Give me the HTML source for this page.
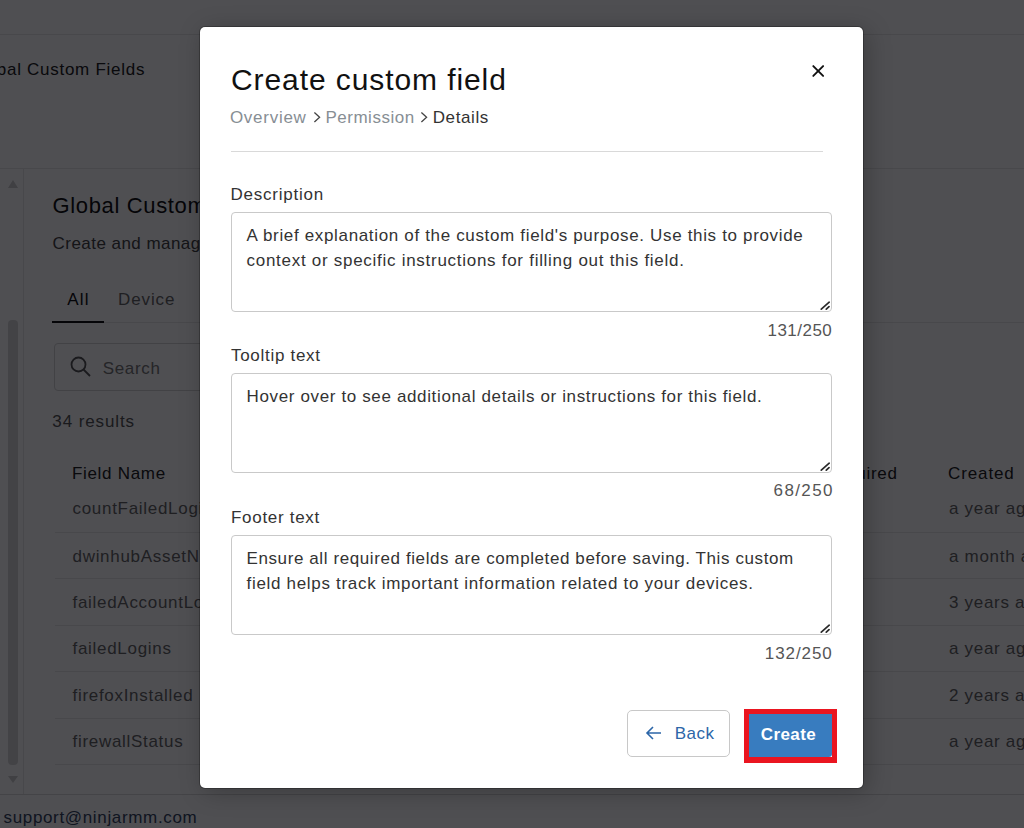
<!DOCTYPE html>
<html>
<head>
<meta charset="utf-8">
<style>
html,body{margin:0;padding:0;}
body{width:1024px;height:828px;overflow:hidden;position:relative;background:#fff;font-family:"Liberation Sans",sans-serif;}
.t{position:absolute;white-space:pre;font-size:17px;line-height:17px;letter-spacing:0.7px;}
.ln{position:absolute;background:#e8e8e8;}
#overlay{position:absolute;left:0;top:0;width:1024px;height:828px;background:rgba(0,0,5,0.69);}
#modal{position:absolute;left:200px;top:27px;width:663px;height:761px;background:#fff;border-radius:5px;box-shadow:0 0 0 1px rgba(0,0,0,0.25),4px 4px 24px rgba(0,0,0,0.25);}
.ta{position:absolute;left:231px;width:599px;height:98px;border:1px solid #c9c9c9;border-radius:4px;box-sizing:content-box;}
.tat{position:absolute;left:246.5px;width:600px;font-size:17px;line-height:25px;letter-spacing:0.58px;color:#333;white-space:pre;}
.grip{position:absolute;width:12px;height:12px;}
</style>
</head>
<body>
<!-- background page -->
<div class="ln" style="left:0;top:34px;width:1024px;height:1px;"></div>
<div class="t" style="left:-31.8px;top:60.9px;letter-spacing:0.72px;color:#222;">Global Custom Fields</div>
<div class="ln" style="left:0;top:168px;width:1024px;height:1px;"></div>
<div class="ln" style="left:23px;top:169px;width:1px;height:625px;background:#e8e8e8;"></div>
<div class="ln" style="left:0;top:794px;width:1024px;height:1px;background:#dcdcdc;"></div>
<!-- scrollbar -->
<div style="position:absolute;left:8px;top:180px;width:0;height:0;border-left:5.5px solid transparent;border-right:5.5px solid transparent;border-bottom:8px solid #cdcdcd;"></div>
<div style="position:absolute;left:8px;top:320px;width:10px;height:445px;border-radius:4px;background:#d9d9d9;"></div>
<div style="position:absolute;left:8px;top:776px;width:0;height:0;border-left:5.5px solid transparent;border-right:5.5px solid transparent;border-top:7px solid #cdcdcd;"></div>

<div class="t" style="left:52.6px;top:194.5px;font-size:22px;line-height:22px;letter-spacing:0.64px;color:#111;">Global Custom Fields</div>
<div class="t" style="left:52.6px;top:234.6px;letter-spacing:0.45px;color:#444;">Create and manage custom fields</div>
<div class="t" style="left:67.2px;top:290.5px;letter-spacing:1.2px;color:#111;">All</div>
<div class="t" style="left:118px;top:290.5px;letter-spacing:0.9px;color:#666;">Device</div>
<div class="ln" style="left:53px;top:322px;width:971px;height:1px;"></div>
<div style="position:absolute;left:52px;top:321px;width:52px;height:2px;background:#111;"></div>
<div style="position:absolute;left:54px;top:343px;width:400px;height:46px;border:1px solid #d4d4d4;border-radius:4px;"></div>
<svg style="position:absolute;left:70px;top:356px;" width="22" height="22" viewBox="0 0 22 22"><circle cx="8.5" cy="8.5" r="7" fill="none" stroke="#555" stroke-width="1.8"/><line x1="13.5" y1="13.5" x2="20" y2="20" stroke="#555" stroke-width="1.8"/></svg>
<div class="t" style="left:102.7px;top:360.3px;letter-spacing:0.68px;color:#777;">Search</div>
<div class="t" style="left:52.3px;top:412.7px;letter-spacing:0.9px;color:#555;">34 results</div>

<div class="t" style="left:71.9px;top:465.4px;letter-spacing:0.7px;color:#222;">Field Name</div>
<div class="t" style="left:823px;top:465.4px;color:#222;">Required</div>
<div class="t" style="left:948.1px;top:465.4px;letter-spacing:0.87px;color:#222;">Created</div>

<div class="t" style="left:72.5px;top:500.3px;color:#666;">countFailedLogins</div>
<div class="t" style="left:949px;top:500.3px;color:#666;">a year ago</div>
<div class="ln" style="left:55px;top:532px;width:969px;height:1px;"></div>
<div class="t" style="left:72.5px;top:547.5px;color:#666;">dwinhubAssetNumber</div>
<div class="t" style="left:949px;top:547.5px;color:#666;">a month ago</div>
<div class="ln" style="left:55px;top:578px;width:969px;height:1px;"></div>
<div class="t" style="left:72.5px;top:593.6px;color:#666;">failedAccountLockouts</div>
<div class="t" style="left:949px;top:593.6px;color:#666;">3 years ago</div>
<div class="ln" style="left:55px;top:625px;width:969px;height:1px;"></div>
<div class="t" style="left:72.5px;top:639.5px;color:#666;">failedLogins</div>
<div class="t" style="left:949px;top:639.5px;color:#666;">a year ago</div>
<div class="ln" style="left:55px;top:671px;width:969px;height:1px;"></div>
<div class="t" style="left:72.5px;top:686.5px;color:#666;">firefoxInstalled</div>
<div class="t" style="left:949px;top:686.5px;color:#666;">2 years ago</div>
<div class="ln" style="left:55px;top:718px;width:969px;height:1px;"></div>
<div class="t" style="left:72.5px;top:732.5px;color:#666;">firewallStatus</div>
<div class="t" style="left:949px;top:732.5px;color:#666;">a year ago</div>
<div class="ln" style="left:55px;top:764px;width:969px;height:1px;"></div>

<div class="t" style="left:3.5px;top:808.8px;letter-spacing:0.66px;color:#34455f;">support@ninjarmm.com</div>

<div id="overlay"></div>

<!-- modal -->
<div id="modal"></div>
<div class="t" style="left:231px;top:64.8px;font-size:30px;line-height:30px;letter-spacing:0.91px;color:#111;">Create custom field</div>
<svg style="position:absolute;left:811px;top:64px;" width="14" height="14" viewBox="0 0 14 14"><path d="M2.3 2.1 L12.1 11.9 M12.1 2.1 L2.3 11.9" stroke="#111" stroke-width="1.9" stroke-linecap="round"/></svg>
<div class="t" style="left:229.9px;top:108.8px;letter-spacing:0.73px;color:#878e94;">Overview</div>
<svg style="position:absolute;left:312px;top:110px;" width="10" height="14" viewBox="0 0 10 14"><path d="M2.4 2.4 L7.6 7.2 L2.4 12" fill="none" stroke="#444" stroke-width="1.3"/></svg>
<div class="t" style="left:325.4px;top:108.8px;letter-spacing:0.52px;color:#878e94;">Permission</div>
<svg style="position:absolute;left:419px;top:110px;" width="10" height="14" viewBox="0 0 10 14"><path d="M2.4 2.4 L7.6 7.2 L2.4 12" fill="none" stroke="#444" stroke-width="1.3"/></svg>
<div class="t" style="left:432.7px;top:108.8px;letter-spacing:0.62px;color:#333;">Details</div>
<div style="position:absolute;left:231px;top:151px;width:592px;height:1px;background:#d9d9d9;"></div>

<div class="t" style="left:230.4px;top:185.7px;letter-spacing:0.78px;color:#333;">Description</div>
<div class="ta" style="top:212px;"></div>
<div class="tat" style="top:223.1px;"><span style="letter-spacing:0.66px">A brief explanation of the custom field's purpose. Use this to provide</span>
<span style="letter-spacing:0.72px">context or specific instructions for filling out this field.</span></div>
<svg class="grip" style="left:818px;top:298px;" viewBox="0 0 12 12"><path d="M3.3 11.2 L11.2 4.2 M8.3 11.2 L11 8.7" stroke="#2a2a2a" stroke-width="1.7" stroke-linecap="round"/></svg>
<div class="t" style="left:767.5px;top:321.6px;letter-spacing:0.47px;color:#555;">131/250</div>

<div class="t" style="left:231px;top:346.8px;color:#333;">Tooltip text</div>
<div class="ta" style="top:373px;"></div>
<div class="tat" style="top:384.3px;letter-spacing:0.64px;">Hover over to see additional details or instructions for this field.</div>
<svg class="grip" style="left:818px;top:459px;" viewBox="0 0 12 12"><path d="M3.3 11.2 L11.2 4.2 M8.3 11.2 L11 8.7" stroke="#2a2a2a" stroke-width="1.7" stroke-linecap="round"/></svg>
<div class="t" style="left:773.6px;top:481.6px;letter-spacing:1.38px;color:#555;">68/250</div>

<div class="t" style="left:231px;top:509px;color:#333;">Footer text</div>
<div class="ta" style="top:535px;"></div>
<div class="tat" style="top:546px;"><span style="letter-spacing:0.6px">Ensure all required fields are completed before saving. This custom</span>
<span style="letter-spacing:0.69px">field helps track important information related to your devices.</span></div>
<svg class="grip" style="left:818px;top:621px;" viewBox="0 0 12 12"><path d="M3.3 11.2 L11.2 4.2 M8.3 11.2 L11 8.7" stroke="#2a2a2a" stroke-width="1.7" stroke-linecap="round"/></svg>
<div class="t" style="left:764.8px;top:644.5px;letter-spacing:0.92px;color:#555;">132/250</div>

<!-- buttons -->
<div style="position:absolute;left:627px;top:710px;width:101px;height:45px;border:1px solid #c8c8c8;border-radius:5px;"></div>
<svg style="position:absolute;left:645px;top:725px;" width="18" height="16" viewBox="0 0 18 16"><path d="M16 8 L2 8 M8 2 L2 8 L8 14" fill="none" stroke="#2c66a8" stroke-width="1.6"/></svg>
<div class="t" style="left:674.7px;top:724.6px;letter-spacing:0.53px;color:#2c66a8;">Back</div>
<div style="position:absolute;left:745px;top:710px;width:87px;height:47px;background:#387cbf;border-radius:3px;"></div>
<div class="t" style="left:760.8px;top:725.7px;font-weight:bold;letter-spacing:0.4px;color:#fff;">Create</div>
<div style="position:absolute;left:744px;top:709px;width:83px;height:43px;border:5px solid #ea1520;border-bottom-width:6px;"></div>
</body>
</html>
